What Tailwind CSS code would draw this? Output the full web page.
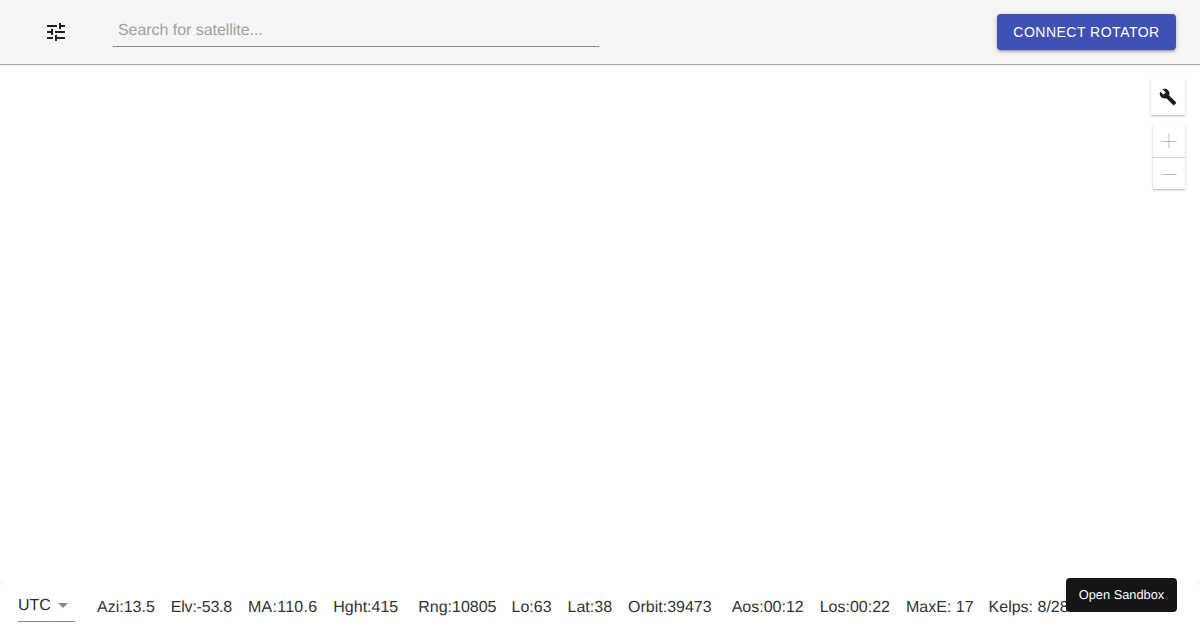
<!DOCTYPE html>
<html>
<head>
<meta charset="utf-8">
<script src="https://cdn.jsdelivr.net/npm/@tailwindcss/browser@4"></script>
</head>
<body class="m-0 bg-white">
<div class="relative flex h-[630px] w-[1200px] flex-col overflow-hidden bg-white font-['Liberation_Sans',sans-serif] [text-rendering:geometricPrecision]">
  <header class="z-10 flex h-[65px] shrink-0 items-center border-b border-[#a8a8a8] bg-[#f5f5f5] pr-6 pl-[44px] shadow-[0_1px_2px_rgba(0,0,0,0.08)]">
    <svg class="h-6 w-6 text-[#212121]" viewBox="0 0 24 24" fill="currentColor"><path d="M3 17v2h6v-2H3zM3 5v2h10V5H3zm10 16v-2h8v-2h-8v-2h-2v6h2zM7 9v2H3v2h4v2h2V9H7zm14 4v-2H11v2h10zm-6-4h2V7h4V5h-4V3h-2v6z"/></svg>
    <div class="mb-[17px] ml-[45px] flex h-[37px] w-[486px] items-start self-end border-b border-[#8a8a8a] pt-[11px] pl-[5px]">
      <span class="text-base leading-[19px] tracking-[-0.05px] text-[#a2a2a2]">Search for satellite...</span>
    </div>
    <button class="ml-auto flex h-9 w-[179px] items-center justify-center rounded bg-[#3f51b5] text-sm font-normal tracking-[0.5px] text-white shadow-[0_1px_5px_rgba(0,0,0,0.2),0_2px_2px_rgba(0,0,0,0.14),0_3px_1px_-2px_rgba(0,0,0,0.12)]">CONNECT ROTATOR</button>
  </header>

  <main class="relative flex-1 bg-white">
    <div class="absolute top-[14px] right-[15px] flex h-[36px] w-[34px] items-center justify-center bg-white shadow-[0_1px_2px_rgba(0,0,0,0.3)]">
      <svg class="h-[18px] w-[18px] text-[#1c1c1c]" viewBox="0 0 24 24" fill="currentColor"><path d="M22.7 19l-9.1-9.1c.9-2.3.4-5-1.5-6.9-2-2-5-2.4-7.4-1.3L9 6 6 9 1.600 4.700C.4 7.100.9 10.100 2.900 12.100c1.900 1.900 4.600 2.400 6.900 1.500l9.100 9.100c.4.400 1 .4 1.400 0l2.300-2.300c.5-.4.5-1.100.1-1.400z"/></svg>
    </div>
    <div class="absolute top-[60px] right-[15px] flex w-[32px] flex-col bg-white shadow-[0_1px_2px_rgba(0,0,0,0.3)]">
      <div class="flex h-[33px] items-center justify-center border-b border-[#d6d6d6]">
        <svg class="h-4 w-4" viewBox="0 0 16 16" stroke="#bdbdbd" fill="none"><path d="M8 .5v15M.5 8.500h15"/></svg>
      </div>
      <div class="flex h-[31px] items-center justify-center">
        <svg class="h-4 w-4" viewBox="0 0 16 16" stroke="#bdbdbd" fill="none"><path d="M.5 8.500h15"/></svg>
      </div>
    </div>
  </main>

  <footer class="flex h-[49px] shrink-0 items-center rounded-t-md bg-white pl-[18px] text-base text-[#333] shadow-[0_-1px_3px_rgba(0,0,0,0.12)]">
    <div class="flex h-[33px] w-[57px] items-start justify-between border-b border-[#8a8a8a] pt-[7px] pr-[7px] text-[#2b2b2b]">
      <span class="leading-[19px]">UTC</span>
      <span class="mt-[7px] h-0 w-0 border-x-[5px] border-t-[5px] border-x-transparent border-t-[#8a8a8a]"></span>
    </div>
    <div class="ml-[22px] flex items-center pt-[4px] text-[16px] leading-[19px] whitespace-nowrap">
      <span>Azi:13.5</span>
      <span class="ml-4 tracking-[-0.22px]">Elv:-53.8</span>
      <span class="ml-4 tracking-[0.25px]">MA:110.6</span>
      <span class="ml-4">Hght:415</span>
      <span class="ml-5">Rng:10805</span>
      <span class="ml-[15px]">Lo:63</span>
      <span class="ml-4">Lat:38</span>
      <span class="ml-4">Orbit:39473</span>
      <span class="ml-5">Aos:00:12</span>
      <span class="ml-4">Los:00:22</span>
      <span class="ml-4">MaxE: 17</span>
      <span class="ml-[15px]">Kelps: 8/28</span>
    </div>
  </footer>

  <div class="absolute top-[578px] left-[1066px] flex h-[34px] w-[111px] items-center justify-center rounded bg-[#151515] text-[12.8px] text-white">Open Sandbox</div>
</div>
</body>
</html>
